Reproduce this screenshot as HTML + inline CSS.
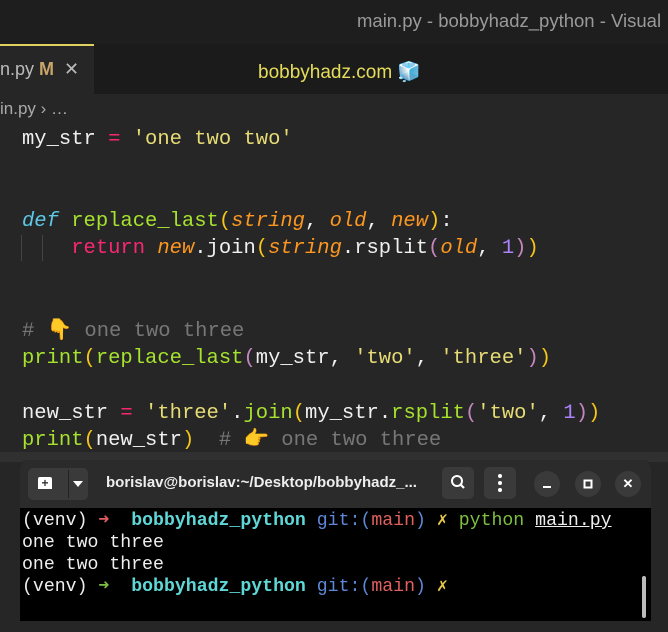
<!DOCTYPE html>
<html><head><style>
*{margin:0;padding:0;box-sizing:border-box}
body{width:668px;height:632px;background:#262626;position:relative;overflow:hidden;font-family:"Liberation Sans",sans-serif}
.title{position:absolute;left:0;top:0;width:668px;height:44px;background:#1e1e1e;color:#9a9a9a;font-size:18.5px}
.title span{position:absolute;left:357px;top:10px;white-space:nowrap}
.tabs{position:absolute;left:0;top:44px;width:668px;height:50px;background:#1b1b1b}
.tab{position:absolute;left:0;top:0;width:94px;height:50px;background:#262626;border-top:2px solid #e0d060;color:#bbb;font-size:18px}
.tab span{position:absolute;left:0;top:13px;white-space:nowrap}
.site{position:absolute;left:258px;top:60px;color:#e6de5a;font-size:19px}
.crumb{position:absolute;left:0;top:99px;color:#aaa;font-size:17px}
.code{position:absolute;left:22px;font-family:"Liberation Mono",monospace;font-size:20.5px;white-space:pre;color:#f0f0f0;line-height:27px}
.k{color:#5cc8e6;font-style:italic}.f{color:#a6e22e}.p{color:#fd971f;font-style:italic}.s{color:#e6db74}.r{color:#f92672}.n{color:#ae81ff}.c{color:#777}.y{color:#f5c518}.pu{color:#c586c0}
.hl{position:absolute;left:0;top:452px;width:668px;height:10px;background:#303030}
.term{position:absolute;left:20px;top:460px;width:631px;height:161px;background:#000;border-radius:8px 8px 0 0;overflow:hidden}
.th{height:48px;background:#2b2b2b;position:relative}
.btn{position:absolute;background:#3a3a3a;border-radius:5px}
.circ{position:absolute;width:26px;height:26px;border-radius:50%;background:#3a3a3a;color:#fff;font-size:13px;text-align:center;line-height:26px;top:11px;font-weight:bold}
.tt{position:absolute;left:86px;top:14px;color:#eee;font-size:15px;font-weight:bold}
.tb{position:absolute;left:2px;top:50px;font-family:"Liberation Mono",monospace;font-size:18.2px;line-height:22px;color:#eee;white-space:pre}
.g{color:#5fd7d7;font-weight:bold}.b{color:#5f87d7}.rd{color:#e06060}.ye{color:#e6c84a}.gr{color:#7fbf3f}
</style></head><body>
<div class="title"><span>main.py - bobbyhadz_python - Visual</span></div>
<div class="tabs"><div class="tab"><span>n.py <b style="color:#c9a56a">M</b>&nbsp; ✕</span></div></div>
<div class="site">bobbyhadz.com 🧊</div>
<div class="crumb">in.py › …</div>
<div class="code" style="top:126px">my_str <span class="r">=</span> <span class="s">'one two two'</span></div>
<div class="code" style="top:208px"><span class="k">def</span> <span class="f">replace_last</span><span class="y">(</span><span class="p">string</span>, <span class="p">old</span>, <span class="p">new</span><span class="y">)</span>:</div>
<div class="code" style="top:235px">    <span class="r">return</span> <span class="p">new</span>.join<span class="y">(</span><span class="p">string</span>.rsplit<span class="pu">(</span><span class="p">old</span>, <span class="n">1</span><span class="pu">)</span><span class="y">)</span></div>
<div style="position:absolute;left:21px;top:235px;width:1px;height:26px;background:#444"></div>
<div style="position:absolute;left:42px;top:235px;width:1px;height:26px;background:#444"></div>
<div class="code" style="top:318px"><span class="c"># 👇 one two three</span></div>
<div class="code" style="top:345px"><span class="f">print</span><span class="y">(</span><span class="f">replace_last</span><span class="pu">(</span>my_str, <span class="s">'two'</span>, <span class="s">'three'</span><span class="pu">)</span><span class="y">)</span></div>
<div class="code" style="top:400px">new_str <span class="r">=</span> <span class="s">'three'</span>.<span class="f">join</span><span class="y">(</span>my_str.<span class="f">rsplit</span><span class="pu">(</span><span class="s">'two'</span>, <span class="n">1</span><span class="pu">)</span><span class="y">)</span></div>
<div class="code" style="top:427px"><span class="f">print</span><span class="y">(</span>new_str<span class="y">)</span>  <span class="c"># 👉 one two three</span></div>
<div class="hl"></div>
<div class="term">
<div class="th">
<div class="btn" style="left:8px;top:8px;width:60px;height:32px"></div>
<div style="position:absolute;left:48px;top:10px;width:1px;height:28px;background:#222"></div>
<div style="position:absolute;left:18px;top:17px;width:14px;height:12px;background:#fff;border-radius:2px 2px 0 0;color:#333;font-size:12px;line-height:12px;text-align:center;font-weight:bold">+</div>
<div style="position:absolute;left:53px;top:21px;border-left:5px solid transparent;border-right:5px solid transparent;border-top:6px solid #fff"></div>
<div class="tt">borislav@borislav:~/Desktop/bobbyhadz_...</div>
<div class="btn" style="left:422px;top:7px;width:32px;height:32px"><svg width="32" height="32"><circle cx="15" cy="14" r="5" fill="none" stroke="#fff" stroke-width="2"/><line x1="18.5" y1="17.5" x2="22" y2="21" stroke="#fff" stroke-width="2.2"/></svg></div>
<div class="btn" style="left:464px;top:7px;width:32px;height:32px"><svg width="32" height="32"><circle cx="16" cy="9" r="2" fill="#fff"/><circle cx="16" cy="16" r="2" fill="#fff"/><circle cx="16" cy="23" r="2" fill="#fff"/></svg></div>
<div class="circ" style="left:514px"><svg width="26" height="26"><rect x="9" y="15" width="8" height="2" fill="#fff"/></svg></div>
<div class="circ" style="left:555px"><svg width="26" height="26"><rect x="9.5" y="9.5" width="7" height="7" fill="none" stroke="#fff" stroke-width="2"/></svg></div>
<div class="circ" style="left:595px">✕</div>
</div>
<div class="tb">(venv) <span class="rd">➜</span>  <span class="g">bobbyhadz_python</span> <span class="b">git:(</span><span class="rd">main</span><span class="b">)</span> <span class="ye">✗</span> <span class="gr">python</span> <u>main.py</u>
one two three
one two three
(venv) <span class="gr">➜</span>  <span class="g">bobbyhadz_python</span> <span class="b">git:(</span><span class="rd">main</span><span class="b">)</span> <span class="ye">✗</span></div>
<div style="position:absolute;left:622px;top:116px;width:4px;height:42px;background:#bbb;border-radius:2px"></div>
</div>
</body></html>
